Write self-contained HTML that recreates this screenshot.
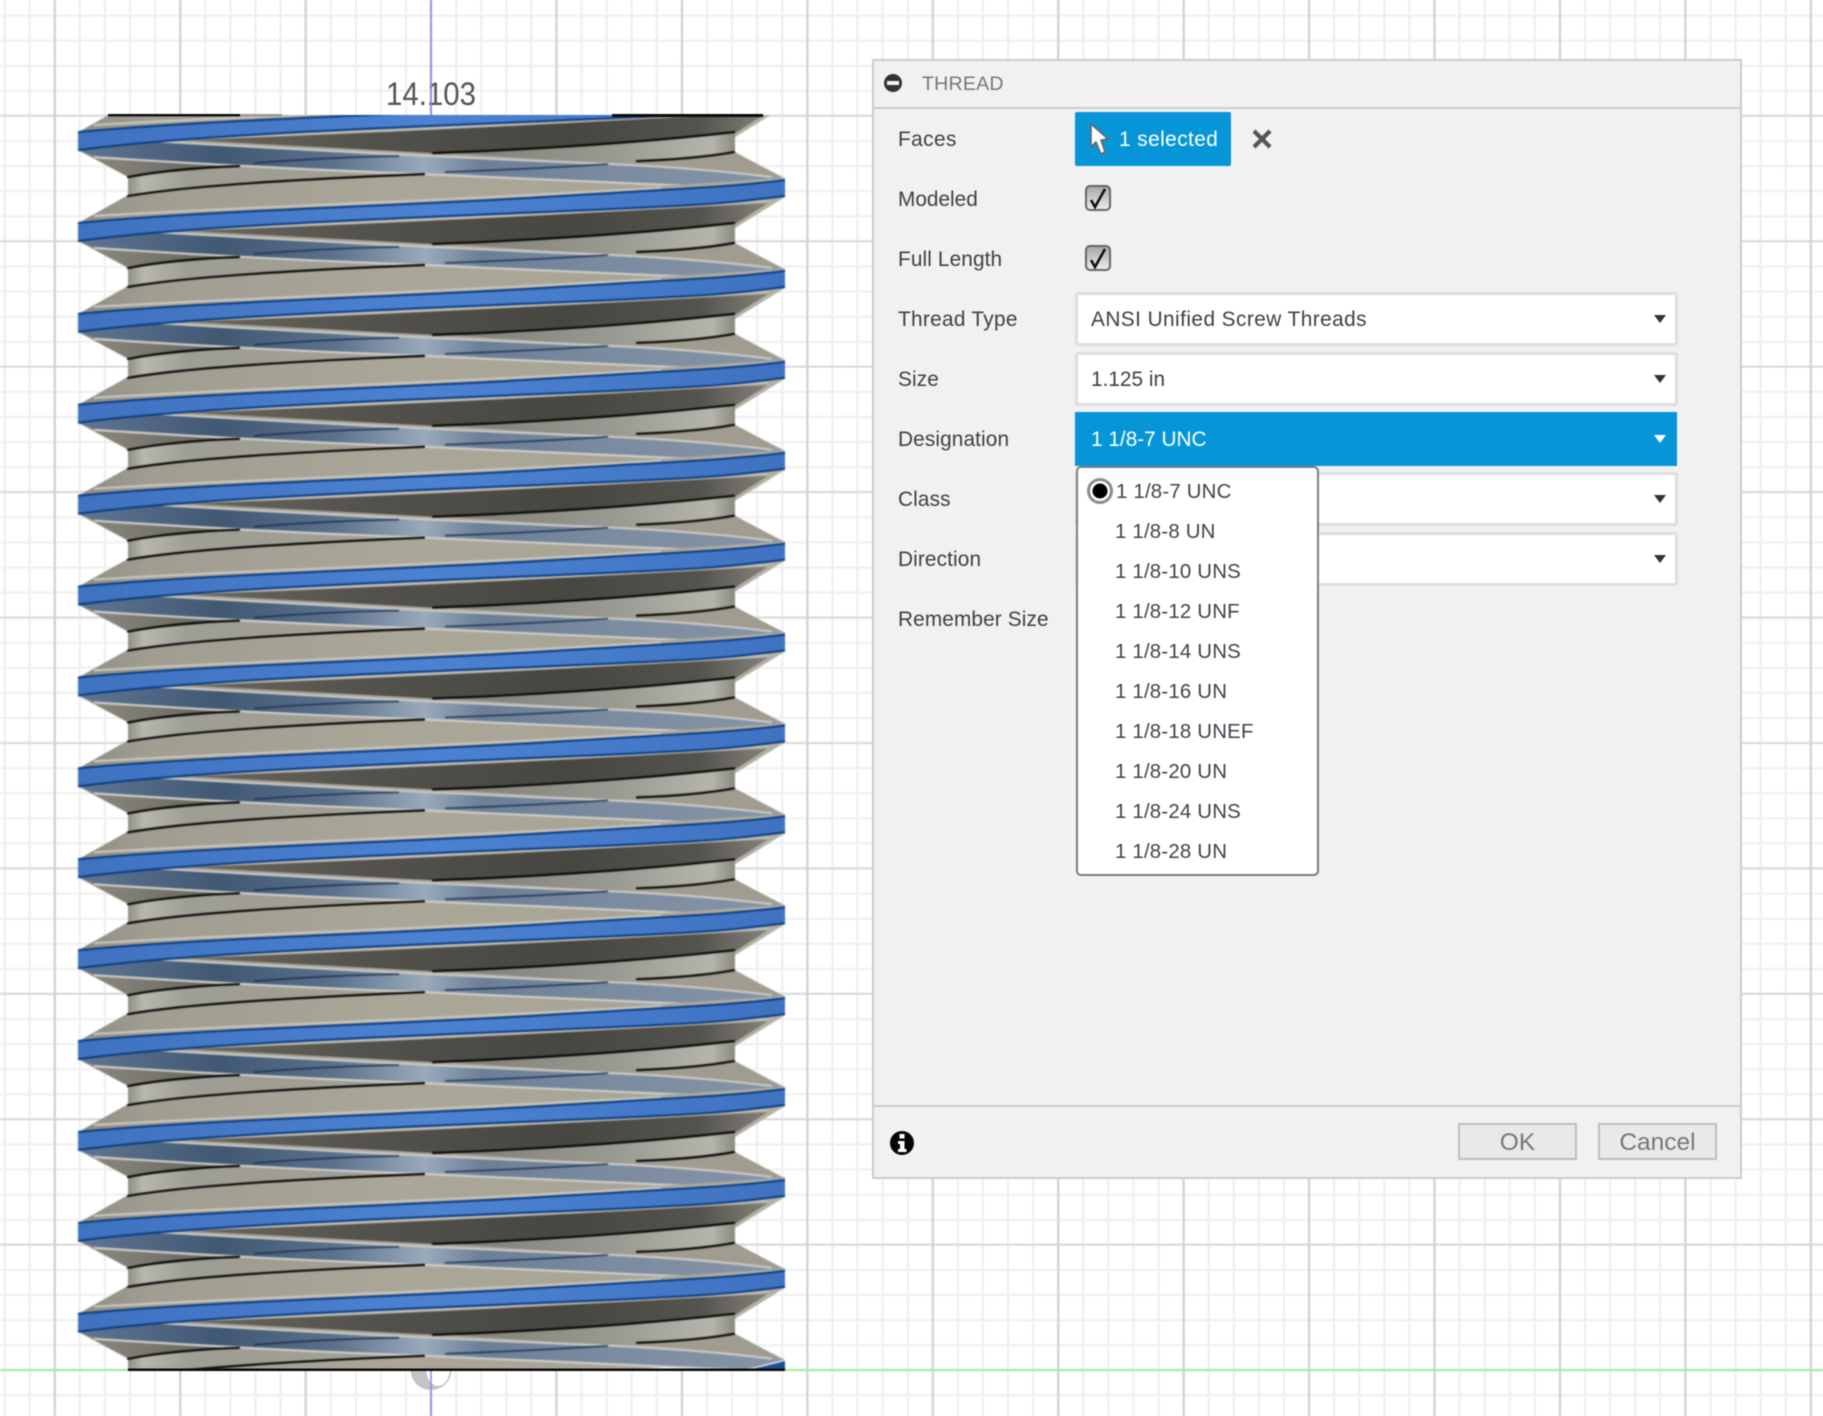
<!DOCTYPE html>
<html><head><meta charset="utf-8"><title>Thread</title>
<style>
html,body{margin:0;padding:0;background:#fff;width:1823px;height:1416px;overflow:hidden}
#root{position:absolute;left:0;top:0;width:1823px;height:1416px;overflow:hidden;filter:blur(.45px);font-family:"Liberation Sans",Arial,sans-serif}
svg{position:absolute;left:0;top:0}
.dlg{position:absolute;left:872px;top:59px;width:870px;height:1120px;box-sizing:border-box;background:#f1f1f1;border:2px solid #ccc}
.a{position:absolute;white-space:nowrap}
.lb{left:898px;height:30px;line-height:30px;font-size:20.8px;color:#404040;letter-spacing:.12px}
.sel{position:absolute;left:1075px;width:603px;height:54px;box-sizing:border-box;background:#fff;border:3px solid #dedede;border-radius:3px}
.val{left:1091px;height:30px;line-height:30px;font-size:20.8px;color:#404040}
.dd{position:absolute;left:1076px;top:466px;width:243px;height:410px;box-sizing:border-box;background:#fff;border:2px solid #7c7c7c;border-radius:5px}
.it{left:1115px;height:30px;line-height:30px;font-size:20.4px;color:#453f4b;letter-spacing:.2px}
.btn{position:absolute;top:1123px;height:37px;width:119px;box-sizing:border-box;background:#e9e9e9;border:2px solid #bdbdbd;text-align:center;line-height:35px;font-size:24.5px;color:#777}
.hl{position:absolute;left:874px;width:866px;height:2px;background:#ccc}
.cb{position:absolute;left:1085px;width:26px;height:26px;box-sizing:border-box;border:2px solid #666;border-radius:5px;background:linear-gradient(#a8a8a8,#ececec)}
</style></head><body>
<div id="root">
<svg width="1823" height="1416" viewBox="0 0 1823 1416">
<defs>
<pattern id="mv" patternUnits="userSpaceOnUse" x="-8" y="0" width="25.086" height="100"><rect x="11.5" y="0" width="2.2" height="100" fill="#efefef"/></pattern>
<pattern id="mh" patternUnits="userSpaceOnUse" x="0" y="3.0" width="100" height="25.086"><rect x="0" y="11.5" width="100" height="2.2" fill="#f0f0f0"/></pattern>
<pattern id="Mv" patternUnits="userSpaceOnUse" x="-8" y="0" width="125.43" height="100"><rect x="61.7" y="0" width="2.2" height="100" fill="#d2d2d2"/></pattern>
<pattern id="Mh" patternUnits="userSpaceOnUse" x="0" y="53" width="100" height="125.43"><rect x="0" y="61.7" width="100" height="2.2" fill="#dcdcdc"/></pattern>
<clipPath id="cl"><rect x="60" y="115" width="726" height="1255"/></clipPath>
<linearGradient id="gt" gradientUnits="userSpaceOnUse" x1="78" y1="0" x2="785" y2="0">
<stop offset="0" stop-color="#8f8d83"/><stop offset=".1" stop-color="#a09d91"/><stop offset=".45" stop-color="#aaa698"/><stop offset=".8" stop-color="#a8a496"/><stop offset="1" stop-color="#b5b2a6"/></linearGradient>
<linearGradient id="gd" gradientUnits="userSpaceOnUse" x1="190" y1="0" x2="770" y2="0">
<stop offset="0" stop-color="#69675f"/><stop offset=".3" stop-color="#54524c"/><stop offset=".65" stop-color="#474641"/><stop offset=".88" stop-color="#55534e"/><stop offset="1" stop-color="#85837a"/></linearGradient>
<linearGradient id="gs" gradientUnits="userSpaceOnUse" x1="79" y1="0" x2="785" y2="0">
<stop offset="0" stop-color="#5f7593"/><stop offset=".2" stop-color="#415873"/><stop offset=".36" stop-color="#5a708b"/><stop offset=".49" stop-color="#9aaabb"/><stop offset=".57" stop-color="#6c7f97"/><stop offset=".75" stop-color="#7b8ba0"/><stop offset="1" stop-color="#8794a6"/></linearGradient>
<linearGradient id="gb" gradientUnits="userSpaceOnUse" x1="78" y1="0" x2="785" y2="0">
<stop offset="0" stop-color="#3f72bf"/><stop offset=".5" stop-color="#4d82d2"/><stop offset="1" stop-color="#3f73c2"/></linearGradient>
<linearGradient id="gr" gradientUnits="userSpaceOnUse" x1="448" y1="0" x2="735" y2="0">
<stop offset="0" stop-color="#7e7d74"/><stop offset=".6" stop-color="#9a9b92"/><stop offset=".92" stop-color="#b5b5ab"/><stop offset="1" stop-color="#8a8a80"/></linearGradient>
<linearGradient id="gl" gradientUnits="userSpaceOnUse" x1="128" y1="0" x2="430" y2="0">
<stop offset="0" stop-color="#8f8f85"/><stop offset=".05" stop-color="#b8b7ae"/><stop offset=".2" stop-color="#9f9e94"/><stop offset="1" stop-color="#a3a093"/></linearGradient>
<linearGradient id="gf" gradientUnits="userSpaceOnUse" x1="90" y1="0" x2="240" y2="0">
<stop offset="0" stop-color="#8a887e"/><stop offset="1" stop-color="#5f5e58"/></linearGradient>
<g id="t">
<polygon fill="url(#gt)" points="78,223 78,241 128,268 128,286 78,314 785,269 735,244 735,228 785,197 785,178"/>
<path fill="url(#gl)" d="M128 267 L239 257 L424 265 Q200 274 128 287Z"/>
<polygon fill="url(#gf)" points="92,248 239,257 128,267"/>
<path fill="url(#gs)" d="M79 241 L138 231 Q370 245 612 255 Q700 259 785 269 L740 280 Q560 272 424 264 Q260 259 94 247Z"/>
<path fill="url(#gr)" d="M433 243 Q600 238 735 224 V243 Q690 250 637 252 L612 255Z"/>
<polygon fill="#a09c8f" points="637,252 735,243 782,268 612,255"/>
<path fill="url(#gd)" d="M190 231 Q480 220 768 203 L735 224 Q600 238 433 244Z"/>
<path fill="none" stroke="#cdccc7" stroke-width="2.2" d="M94 248 Q260 259 424 265 Q580 272 738 279"/>
<path fill="none" stroke="#c9c8c3" stroke-width="2.2" d="M138 231 Q370 245 612 255 Q700 259 772 268"/>
<path fill="none" stroke="#1a2e50" stroke-width="1.8" stroke-opacity=".8" d="M254 254 Q330 248 399 247"/>
<path fill="none" stroke="#1a2e50" stroke-width="1.8" stroke-opacity=".8" d="M445 263 Q530 260 608 255"/>
<path fill="none" stroke="#0a0a0a" stroke-width="2.2" stroke-linecap="round" d="M433 244 Q600 238 734 223"/>
<path fill="none" stroke="#0a0a0a" stroke-width="2.2" stroke-linecap="round" d="M637 252 Q695 250 734 243"/>
<path fill="none" stroke="#0a0a0a" stroke-width="2.2" stroke-linecap="round" d="M128 268 Q175 259 239 257"/>
<path fill="none" stroke="#0a0a0a" stroke-width="2.2" stroke-linecap="round" d="M128 287 Q200 274 424 265"/>
<path fill="none" stroke="#c6c5bf" stroke-width="2.2" d="M94 216 C220 208 400 203 661 188"/>
<path fill="none" stroke="#bfbeb8" stroke-width="2.2" d="M138 231 C260 227 480 218 768 201"/>
<path fill="url(#gb)" d="M78 223 C200 211 400 206 545 197 S730 187 785 180 V196 C720 204 640 207 545 212 S190 226 78 241Z"/>
<path fill="none" stroke="#0c3c80" stroke-width="2" d="M78 223 C200 211 400 206 545 197 S730 187 785 180"/>
<path fill="none" stroke="#0c3c80" stroke-width="2" d="M78 241 C190 226 380 219 545 212 S720 204 785 196"/>
</g>
</defs>
<rect width="1823" height="1416" fill="#fff"/>
<rect width="1823" height="1416" fill="url(#mv)"/>
<rect width="1823" height="1416" fill="url(#mh)"/>
<rect width="1823" height="1416" fill="url(#Mh)"/>
<rect width="1823" height="1416" fill="url(#Mv)"/>
<ellipse cx="431" cy="1370" rx="20.5" ry="20" fill="#c4c4c4"/>
<ellipse cx="438" cy="1368" rx="12" ry="18" fill="#fff"/>
<rect x="0" y="1369" width="1823" height="2" fill="#a6eea6"/>
<rect x="430.2" y="0" width="1.6" height="1416" fill="#8d8de6"/>
<text x="431" y="105" font-family="'Liberation Sans',Arial,sans-serif" font-size="32" fill="#555" text-anchor="middle" textLength="90" lengthAdjust="spacingAndGlyphs">14.103</text>
<rect x="430.2" y="60" width="1.6" height="56" fill="#8d8de6"/>
<g clip-path="url(#cl)" style="filter:blur(.4px)">
<use href="#t" y="-181.8"/><use href="#t" y="-90.9"/><use href="#t" y="0"/><use href="#t" y="90.9"/>
<use href="#t" y="181.8"/><use href="#t" y="272.7"/><use href="#t" y="363.6"/><use href="#t" y="454.5"/>
<use href="#t" y="545.4"/><use href="#t" y="636.3"/><use href="#t" y="727.2"/><use href="#t" y="818.1"/>
<use href="#t" y="909"/><use href="#t" y="999.9"/><use href="#t" y="1090.8"/>
<polygon points="748,1370 785,1361 785,1370" fill="#1c4d96"/>
</g>
<rect x="108" y="114" width="132" height="2.4" fill="#0a0a0a"/>
<rect x="240" y="114" width="42" height="2.4" fill="#9a9890"/>
<rect x="612" y="114" width="151" height="3" fill="#0a0a0a"/>
<rect x="128" y="1368.5" width="657" height="2.5" fill="#0a0a0a"/>
</svg>

<div class="dlg"></div>
<div class="hl" style="top:107px"></div>
<div class="hl" style="top:1105px"></div>

<div class="a" style="left:922px;top:69px;height:30px;line-height:30px;font-size:19.6px;color:#777;letter-spacing:.2px">THREAD</div>

<div class="a lb" style="top:125px;letter-spacing:.45px">Faces</div>
<div class="a lb" style="top:185px;letter-spacing:0">Modeled</div>
<div class="a lb" style="top:245px">Full Length</div>
<div class="a lb" style="top:305px;letter-spacing:.3px">Thread Type</div>
<div class="a lb" style="top:365px">Size</div>
<div class="a lb" style="top:425px">Designation</div>
<div class="a lb" style="top:485px">Class</div>
<div class="a lb" style="top:545px">Direction</div>
<div class="a lb" style="top:605px">Remember Size</div>

<div class="a" style="left:1075px;top:112px;width:156px;height:54px;background:#0696d7;border-radius:2px"></div>
<div class="a" style="left:1119px;top:125px;height:30px;line-height:30px;font-size:20.8px;color:#fff;letter-spacing:.45px">1 selected</div>

<div class="cb" style="top:185px"></div>
<div class="cb" style="top:245px"></div>

<div class="sel" style="top:292px"></div>
<div class="a val" style="top:305px;letter-spacing:.45px">ANSI Unified Screw Threads</div>
<div class="sel" style="top:352px"></div>
<div class="a val" style="top:365px">1.125 in</div>
<div class="a" style="left:1075px;top:412px;width:602px;height:54px;background:#0696d7"></div>
<div class="a val" style="top:425px;color:#fff">1 1/8-7 UNC</div>
<div class="sel" style="top:472px"></div>
<div class="sel" style="top:532px"></div>

<div class="dd"></div>
<div class="a it" style="left:1116px;top:477px">1 1/8-7 UNC</div>
<div class="a it" style="top:517px">1 1/8-8 UN</div>
<div class="a it" style="top:557px">1 1/8-10 UNS</div>
<div class="a it" style="top:597px">1 1/8-12 UNF</div>
<div class="a it" style="top:637px">1 1/8-14 UNS</div>
<div class="a it" style="top:677px">1 1/8-16 UN</div>
<div class="a it" style="top:717px">1 1/8-18 UNEF</div>
<div class="a it" style="top:757px">1 1/8-20 UN</div>
<div class="a it" style="top:797px">1 1/8-24 UNS</div>
<div class="a it" style="top:837px">1 1/8-28 UN</div>

<div class="btn" style="left:1458px">OK</div>
<div class="btn" style="left:1598px">Cancel</div>

<svg width="1823" height="1416" viewBox="0 0 1823 1416">
<circle cx="893" cy="83" r="9" fill="#333"/><rect x="887" y="81" width="12" height="4" fill="#f1f1f1"/>
<polygon points="1091,124 1091,147 1096,142 1101,154 1105,152 1101,140 1108,139" fill="#fff" stroke="#666" stroke-width="1.6" stroke-linejoin="round"/>
<path d="M1254 131L1270 147M1270 131L1254 147" stroke="#555" stroke-width="4.2" fill="none"/>
<path d="M1091 200L1095 207L1105 189M1091 260L1095 267L1105 249" stroke="#111" stroke-width="2.6" fill="none"/>
<polygon points="1654,315 1666,315 1660,323" fill="#333"/>
<polygon points="1654,375 1666,375 1660,383" fill="#333"/>
<polygon points="1654,435 1666,435 1660,443" fill="#fff"/>
<polygon points="1654,495 1666,495 1660,503" fill="#333"/>
<polygon points="1654,555 1666,555 1660,563" fill="#333"/>
<circle cx="1100" cy="491" r="11.5" fill="#fff" stroke="#8c8c8c" stroke-width="3"/>
<circle cx="1100" cy="491" r="7.5" fill="#000"/>
<circle cx="902" cy="1143" r="12" fill="#050505"/>
<rect x="899.5" y="1134" width="5" height="4.5" fill="#fff"/>
<path d="M898 1141H904.5V1149H906.5V1152H898V1149H900V1144H898Z" fill="#fff"/>
</svg>
</div>
</body></html>
